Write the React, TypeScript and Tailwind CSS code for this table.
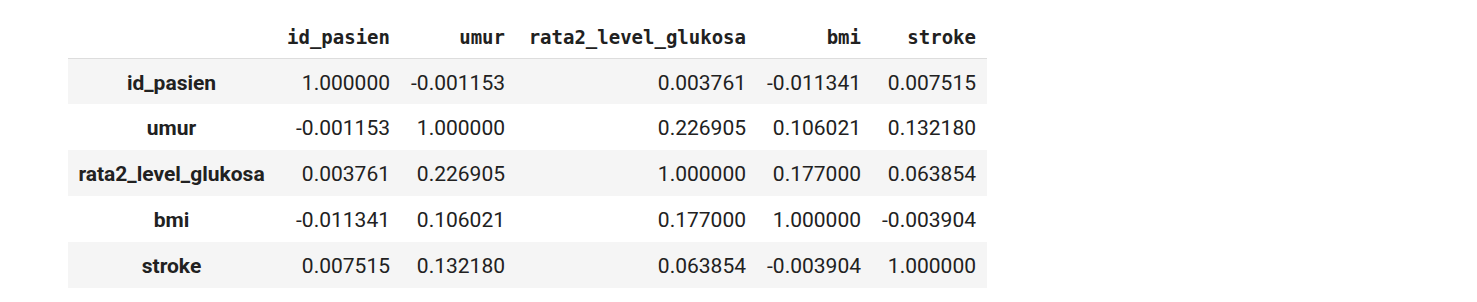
import React from "react";

const cols = ["id_pasien", "umur", "rata2_level_glukosa", "bmi", "stroke"];

const rows: { label: string; values: string[] }[] = [
  { label: "id_pasien", values: ["1.000000", "-0.001153", "0.003761", "-0.011341", "0.007515"] },
  { label: "umur", values: ["-0.001153", "1.000000", "0.226905", "0.106021", "0.132180"] },
  { label: "rata2_level_glukosa", values: ["0.003761", "0.226905", "1.000000", "0.177000", "0.063854"] },
  { label: "bmi", values: ["-0.011341", "0.106021", "0.177000", "1.000000", "-0.003904"] },
  { label: "stroke", values: ["0.007515", "0.132180", "0.063854", "-0.003904", "1.000000"] },
];

const widths = ["w-[207px]", "w-[126px]", "w-[115px]", "w-[241px]", "w-[115px]", "w-[115px]"];

export default function App() {
  return (
    <div className="w-[1477px] h-[302px] bg-white pt-[16px] pl-[68px]">
      <table className="table-fixed border-collapse w-[919px] text-[#212121]">
        <colgroup>
          {widths.map((w, i) => (
            <col key={i} className={w} />
          ))}
        </colgroup>
        <thead>
          <tr className="h-[42px] border-b border-[#dddddd]">
            <th />
            {cols.map((c) => (
              <th
                key={c}
                className="text-right pr-[11px] font-bold text-[19px] font-['DejaVu_Sans_Mono',monospace] whitespace-nowrap"
              >
                {c}
              </th>
            ))}
          </tr>
        </thead>
        <tbody>
          {rows.map((r, i) => (
            <tr key={r.label} className={`h-[46px] ${i % 2 === 0 ? "bg-[#f5f5f5]" : "bg-white"}`}>
              <th className="text-center pt-[4px] font-bold text-[21px] font-['Roboto',sans-serif] whitespace-nowrap">
                {r.label}
              </th>
              {r.values.map((v, j) => (
                <td
                  key={j}
                  className="text-right pr-[11px] pt-[4px] text-[21px] font-['Roboto',sans-serif] whitespace-nowrap"
                >
                  {v}
                </td>
              ))}
            </tr>
          ))}
        </tbody>
      </table>
    </div>
  );
}
